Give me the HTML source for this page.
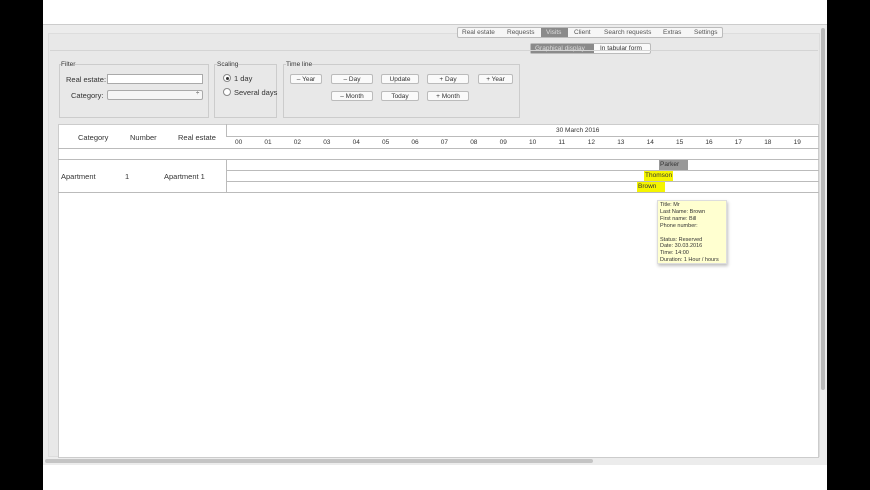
<!DOCTYPE html>
<html><head><meta charset="utf-8"><style>
*{margin:0;padding:0;box-sizing:border-box}
body{width:870px;height:490px;background:#fff;position:relative;overflow:hidden;font-family:"Liberation Sans",sans-serif;font-size:7.5px;color:#333}
div,span{position:absolute}
.bk{background:#000;top:0;height:490px}
.btn{background:#fafafa;border:1px solid #bbb;border-radius:2px;height:10px;line-height:9px;text-align:center;font-size:6.5px;color:#333}
.t{white-space:nowrap}
.hl{height:1px;background:#bbb}
</style></head><body>
<div class="bk" style="left:0;width:43px"></div>
<div class="bk" style="left:827px;width:43px"></div>
<div style="left:43px;top:24px;width:784px;height:441px;background:#ececec;border-top:1px solid #ccc"></div>
<div style="left:48px;top:33px;width:772px;height:424px;background:#e8e8e8;border:1px solid #ddd"></div>
<div style="left:457px;top:27px;width:266px;height:11px;background:#f6f6f6;border:1px solid #bbb;border-radius:2px"></div>
<div class="t" style="left:462px;top:29px;font-size:6.5px;color:#555">Real estate</div>
<div class="t" style="left:507px;top:29px;font-size:6.5px;color:#555">Requests</div>
<div style="left:541px;top:28px;width:27px;height:9px;background:#8a8a8a"></div>
<div class="t" style="left:546px;top:29px;font-size:6.5px;color:#ddd">Visits</div>
<div class="t" style="left:574px;top:29px;font-size:6.5px;color:#555">Client</div>
<div class="t" style="left:604px;top:29px;font-size:6.5px;color:#555">Search requests</div>
<div class="t" style="left:663px;top:29px;font-size:6.5px;color:#555">Extras</div>
<div class="t" style="left:694px;top:29px;font-size:6.5px;color:#555">Settings</div>
<div style="left:530px;top:43px;width:121px;height:11px;background:#fafafa;border:1px solid #bbb;border-radius:2px"></div>
<div style="left:531px;top:44px;width:63px;height:9px;background:#8a8a8a"></div>
<div class="t" style="left:535px;top:45px;font-size:6.5px;color:#ddd">Graphical display</div>
<div class="t" style="left:600px;top:45px;font-size:6.5px">In tabular form</div>
<div style="left:50px;top:50px;width:768px;height:1px;background:#d4d4d4"></div>
<div style="left:59px;top:64px;width:150px;height:54px;border:1px solid #ccc"></div>
<div class="t" style="left:61px;top:61px;background:#e8e8e8;font-size:6.5px">Filter</div>
<div class="t" style="left:66px;top:75px">Real estate:</div>
<div style="left:107px;top:74px;width:96px;height:10px;background:#fff;border:1px solid #aaa"></div>
<div class="t" style="left:71px;top:91px">Category:</div>
<div style="left:107px;top:90px;width:96px;height:10px;background:#f6f6f6;border:1px solid #aaa;border-radius:2px"></div>
<div class="t" style="left:196px;top:91px;font-size:6px">÷</div>
<div style="left:214px;top:64px;width:63px;height:54px;border:1px solid #ccc"></div>
<div class="t" style="left:217px;top:61px;background:#e8e8e8;font-size:6.5px">Scaling</div>
<div style="left:223px;top:74px;width:8px;height:8px;border:1px solid #888;border-radius:50%;background:#fff"></div>
<div style="left:225.5px;top:76.5px;width:3px;height:3px;border-radius:50%;background:#333"></div>
<div class="t" style="left:234px;top:74px">1 day</div>
<div style="left:223px;top:88px;width:8px;height:8px;border:1px solid #888;border-radius:50%;background:#fff"></div>
<div class="t" style="left:234px;top:88px">Several days</div>
<div style="left:283px;top:64px;width:237px;height:54px;border:1px solid #ccc"></div>
<div class="t" style="left:286px;top:61px;background:#e8e8e8;font-size:6.5px">Time line</div>
<div class="btn" style="left:290px;top:74px;width:32px">– Year</div>
<div class="btn" style="left:331px;top:74px;width:42px">– Day</div>
<div class="btn" style="left:381px;top:74px;width:38px">Update</div>
<div class="btn" style="left:427px;top:74px;width:42px">+ Day</div>
<div class="btn" style="left:478px;top:74px;width:35px">+ Year</div>
<div class="btn" style="left:331px;top:91px;width:42px">– Month</div>
<div class="btn" style="left:381px;top:91px;width:38px">Today</div>
<div class="btn" style="left:427px;top:91px;width:42px">+ Month</div>
<div style="left:58px;top:124px;width:761px;height:334px;background:#fff;border:1px solid #ccc"></div>
<div class="t" style="left:78px;top:133px">Category</div>
<div class="t" style="left:130px;top:133px">Number</div>
<div class="t" style="left:178px;top:133px">Real estate</div>
<div style="left:226px;top:124px;width:1px;height:13px;background:#bbb"></div>
<div class="hl" style="left:226px;top:136px;width:593px"></div>
<div class="t" style="left:556px;top:127px;font-size:6.5px">30 March 2016</div>
<div class="hl" style="left:58px;top:148px;width:761px"></div>
<div class="hl" style="left:58px;top:159px;width:761px"></div>
<div style="left:226px;top:159px;width:1px;height:33px;background:#bbb"></div>
<div class="hl" style="left:226px;top:170px;width:593px"></div>
<div class="hl" style="left:226px;top:181px;width:593px"></div>
<div class="hl" style="left:58px;top:192px;width:761px"></div>
<div class="t" style="left:61px;top:172px">Apartment</div>
<div class="t" style="left:125px;top:172px">1</div>
<div class="t" style="left:164px;top:172px">Apartment 1</div>
<div style="left:235px;top:139px;font-size:6.5px;white-space:nowrap">
<span style="left:0">00</span><span style="left:29.4px">01</span><span style="left:58.8px">02</span><span style="left:88.2px">03</span><span style="left:117.6px">04</span><span style="left:147px">05</span><span style="left:176.4px">06</span><span style="left:205.8px">07</span><span style="left:235.2px">08</span><span style="left:264.6px">09</span><span style="left:294px">10</span><span style="left:323.4px">11</span><span style="left:352.8px">12</span><span style="left:382.2px">13</span><span style="left:411.6px">14</span><span style="left:441px">15</span><span style="left:470.4px">16</span><span style="left:499.8px">17</span><span style="left:529.2px">18</span><span style="left:558.6px">19</span>
</div>
<div style="left:659px;top:160px;width:29px;height:10px;background:#999;font-size:6.5px;line-height:10px;padding-left:1px">Parker</div>
<div style="left:644px;top:171px;width:29px;height:10px;background:#f5f500;font-size:6.5px;line-height:10px;padding-left:1px">Thomson</div>
<div style="left:637px;top:182px;width:28px;height:10px;background:#f5f500;font-size:6.5px;line-height:10px;padding-left:1px">Brown</div>
<div style="left:657px;top:200px;width:70px;height:64px;background:#ffffd0;border:1px solid #ddd;box-shadow:1px 2px 3px rgba(0,0,0,.25);font-size:5.5px;line-height:6.9px;padding:1px 2px;color:#333;white-space:nowrap">Title: Mr<br>Last Name: Brown<br>First name: Bill<br>Phone number:<br><br>Status: Reserved<br>Date: 30.03.2016<br>Time: 14:00<br>Duration: 1 Hour / hours</div>
<div style="left:821px;top:28px;width:4px;height:362px;background:#bbb;border-radius:2px"></div>
<div style="left:45px;top:459px;width:548px;height:4px;background:#c4c4c4;border-radius:2px"></div>
</body></html>
